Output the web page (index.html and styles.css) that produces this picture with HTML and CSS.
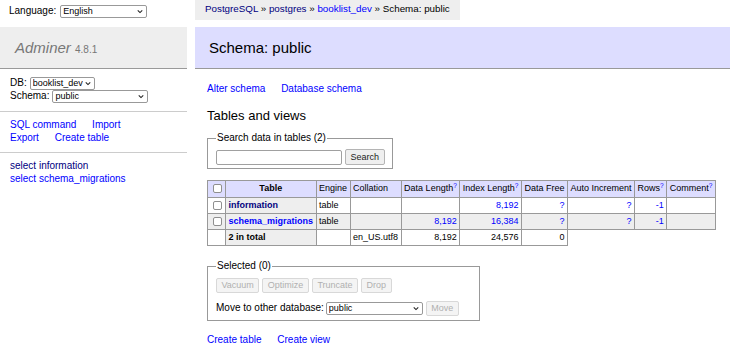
FILE: index.html
```html
<!DOCTYPE html>
<html lang="en">
<head>
    <meta charset="UTF-8">
    <title>Schema: public - booklist_dev - Adminer</title>
    <link rel="stylesheet" href="styles.css">
</head>
<body>
<div class="page">
    <div class="menu">
        <form class="lang">Language:
            <span class="select sel-lang"><select><option>English</option></select><svg class="chevron" viewBox="0 0 8 5"><path d="M1 1l3 3 3-3"/></svg></span>
        </form>
        <h1><a href="#" class="logo">Adminer</a> <span class="version">4.8.1</span></h1>
        <div class="dbs">
            <div class="dbs-row">DB:
                <span class="select sel-db"><select><option>booklist_dev</option></select><svg class="chevron" viewBox="0 0 8 5"><path d="M1 1l3 3 3-3"/></svg></span>
            </div>
            <div class="dbs-row">Schema:
                <span class="select sel-schema"><select><option>public</option></select><svg class="chevron" viewBox="0 0 8 5"><path d="M1 1l3 3 3-3"/></svg></span>
            </div>
        </div>
        <p class="links menu-links">
            <a href="#">SQL command</a> <a href="#">Import</a><br>
            <a href="#">Export</a> <a href="#">Create table</a>
        </p>
        <ul class="tables">
            <li><a href="#" class="visited">select</a> <a href="#" class="visited">information</a></li>
            <li><a href="#">select</a> <a href="#">schema_migrations</a></li>
        </ul>
    </div>

    <div class="content">
        <p class="breadcrumb"><a href="#" class="visited">PostgreSQL</a> &raquo; <a href="#" class="visited">postgres</a> &raquo; <a href="#">booklist_dev</a> &raquo; Schema: public</p>
        <h2>Schema: public</h2>

        <div class="main">
            <p class="links top-links"><a href="#">Alter schema</a> <a href="#">Database schema</a></p>
            <h3>Tables and views</h3>

            <fieldset class="search">
                <legend>Search data in tables (2)</legend>
                <div class="search-row">
                    <input type="search" class="search-input">
                    <input type="submit" value="Search" class="btn">
                </div>
            </fieldset>

            <table class="tables-list">
                <thead>
                    <tr>
                        <td><input type="checkbox" class="check"></td>
                        <th>Table</th>
                        <td>Engine</td>
                        <td>Collation</td>
                        <td>Data Length<sup><a href="#">?</a></sup></td>
                        <td>Index Length<sup><a href="#">?</a></sup></td>
                        <td>Data Free</td>
                        <td>Auto Increment</td>
                        <td>Rows<sup><a href="#">?</a></sup></td>
                        <td class="comment">Comment<sup><a href="#">?</a></sup></td>
                    </tr>
                </thead>
                <tbody>
                    <tr>
                        <td><input type="checkbox" class="check"></td>
                        <th><a href="#" class="visited">information</a></th>
                        <td>table</td>
                        <td></td>
                        <td class="number"></td>
                        <td class="number"><a href="#">8,192</a></td>
                        <td class="number"><a href="#">?</a></td>
                        <td class="number"><a href="#">?</a></td>
                        <td class="number"><a href="#">-1</a></td>
                        <td></td>
                    </tr>
                    <tr>
                        <td><input type="checkbox" class="check"></td>
                        <th><a href="#">schema_migrations</a></th>
                        <td>table</td>
                        <td></td>
                        <td class="number"><a href="#">8,192</a></td>
                        <td class="number"><a href="#">16,384</a></td>
                        <td class="number"><a href="#">?</a></td>
                        <td class="number"><a href="#">?</a></td>
                        <td class="number"><a href="#">-1</a></td>
                        <td></td>
                    </tr>
                    <tr>
                        <td></td>
                        <th>2 in total</th>
                        <td></td>
                        <td>en_US.utf8</td>
                        <td class="number">8,192</td>
                        <td class="number">24,576</td>
                        <td class="number">0</td>
                    </tr>
                </tbody>
            </table>

            <div class="footer">
                <fieldset class="selected">
                    <legend>Selected (0)</legend>
                    <div class="btn-row">
                        <input type="submit" value="Vacuum" class="btn" disabled>
                        <input type="submit" value="Optimize" class="btn" disabled>
                        <input type="submit" value="Truncate" class="btn" disabled>
                        <input type="submit" value="Drop" class="btn" disabled>
                    </div>
                    <p class="move-row">Move to other database:
                        <span class="select sel-move"><select><option>public</option></select><svg class="chevron" viewBox="0 0 8 5"><path d="M1 1l3 3 3-3"/></svg></span>
                        <input type="submit" value="Move" class="btn" disabled>
                    </p>
                </fieldset>
            </div>

            <p class="links bottom-links"><a href="#">Create table</a> <a href="#">Create view</a></p>
        </div>
    </div>
</div>
</body>
</html>
```

FILE: styles.css
```css
body {
    margin: 0;
    font: 10px/1.25 "Liberation Sans", Arial, sans-serif;
    color: #000;
    background: #fff;
}

a {
    color: blue;
    text-decoration: none;
}

a.visited {
    color: navy;
}

p {
    margin: 0;
}

.page {
    display: flex;
    gap: 8px;
}

.menu {
    width: 187px;
    flex: none;
}

.content {
    flex: 1;
    min-width: 0;
}

/* controls */
.select {
    position: relative;
    display: inline-flex;
    height: 13px;
}

.select select {
    appearance: none;
    box-sizing: border-box;
    width: 100%;
    height: 13px;
    margin: 0;
    padding: 0 11px 0 2px;
    font: 9px/11px "Liberation Sans", Arial, sans-serif;
    color: #000;
    background: #fff;
    border: 1px solid #999;
    border-radius: 2px;
}

/* arrow drawn over the select */
.chevron {
    position: absolute;
    right: 4px;
    top: 4px;
    width: 6px;
    height: 5px;
    fill: none;
    stroke: #222;
    stroke-width: 1.4;
    pointer-events: none;
}

.sel-lang { width: 87px; }
.sel-db { width: 65px; }
.sel-schema { width: 96px; }
.sel-move { width: 97px; }

.btn {
    font: 9px "Liberation Sans", Arial, sans-serif;
    height: 16px;
    padding: 0 4.5px;
    margin: 0;
    border: 1px solid #b4b4b4;
    border-radius: 2px;
    background: #efefef;
    color: #222;
}

.btn:disabled {
    height: 15px;
    color: #b0b0b0;
    background: #f4f4f4;
    border-color: #d8d8d8;
}

/* sidebar */
.lang {
    display: flex;
    align-items: center;
    gap: 4px;
    height: 17px;
    padding: 3px 9px 0;
    margin: 0;
}

h1 {
    margin: 7px 0 0;
    padding: 0 15px;
    height: 41px;
    line-height: 41px;
    font-size: 15px;
    font-weight: normal;
    color: #777;
    background: #eee;
    border-bottom: 1px solid #999;
}

h1 .logo {
    color: #777;
    font-style: italic;
}

.version {
    font-size: 10px;
}

.dbs {
    padding: 8px 10px;
    border-bottom: 1px solid #ccc;
}

.dbs-row {
    display: flex;
    align-items: center;
    gap: 3px;
    height: 13px;
}

.links a {
    margin-right: 13px;
    white-space: nowrap;
}

.menu-links {
    padding: 7px 10px 8px;
    border-bottom: 1px solid #ccc;
}

.tables {
    margin: 0;
    padding: 7px 10px;
    list-style: none;
    white-space: nowrap;
}

/* content */
.breadcrumb {
    width: fit-content;
    height: 20px;
    line-height: 18px;
    padding: 0 10px;
    font-size: 9.8px;
    background: #eee;
    white-space: nowrap;
}

h2 {
    margin: 7px 0 0;
    padding: 0 14px;
    height: 41px;
    line-height: 41px;
    font-size: 15px;
    font-weight: normal;
    background: #ddf;
    border-bottom: 1px solid #999;
}

.main {
    padding: 0 12px;
}

.top-links {
    margin-top: 14px;
}

h3 {
    margin: 12px 0 0;
    font-size: 13px;
    font-weight: normal;
    line-height: 1.25;
}

fieldset {
    width: fit-content;
    margin: 8px 0 0;
    padding: 5px 7px 3px 8px;
    border: 1px solid #999;
}

legend {
    padding: 0 1px;
    line-height: 12.5px;
}

.search-row {
    display: flex;
    align-items: center;
    gap: 3px;
}

.search-input {
    box-sizing: border-box;
    width: 126px;
    height: 15px;
    margin: 0;
    padding: 0 2px;
    border: 1px solid #a0a0a0;
    border-radius: 2px;
    font: 9px "Liberation Sans", Arial, sans-serif;
}

.tables-list {
    margin-top: 11px;
    border-collapse: collapse;
    font-size: 9px;
    line-height: 11.25px;
}

.tables-list td,
.tables-list th {
    border: 1px solid #999;
    padding: 2px 2.5px;
    white-space: nowrap;
    text-align: left;
}

.tables-list th {
    background: #eee;
}

.tables-list thead td,
.tables-list thead th {
    background: #ddf;
}

.tables-list thead th {
    text-align: center;
    padding: 2px 4px;
}

.tables-list tbody tr:nth-child(2n) td,
.tables-list tbody tr:nth-child(2n) th {
    background: #eee;
}

.tables-list .number {
    text-align: right;
}

.tables-list .comment {
    min-width: 40px;
}

.tables-list sup {
    font-size: 6.5px;
    line-height: 0;
    vertical-align: 3px;
}

.check {
    appearance: none;
    display: block;
    box-sizing: border-box;
    width: 9px;
    height: 9px;
    margin: 1px 1px 1px 2px;
    border: 1px solid #8f8f8f;
    border-radius: 2px;
    background: #fff;
}

.footer {
    padding: 14px 0 5px;
}

.footer fieldset {
    margin-top: 0;
}

.selected {
    box-sizing: border-box;
    width: 273px;
    padding-bottom: 4px;
}

.btn-row {
    display: flex;
    gap: 3px;
}

.move-row {
    display: flex;
    align-items: center;
    gap: 2px;
    margin-top: 8px;
}

.move-row .btn {
    margin-left: 1px;
}

.bottom-links {
    margin-top: 8px;
}
```
